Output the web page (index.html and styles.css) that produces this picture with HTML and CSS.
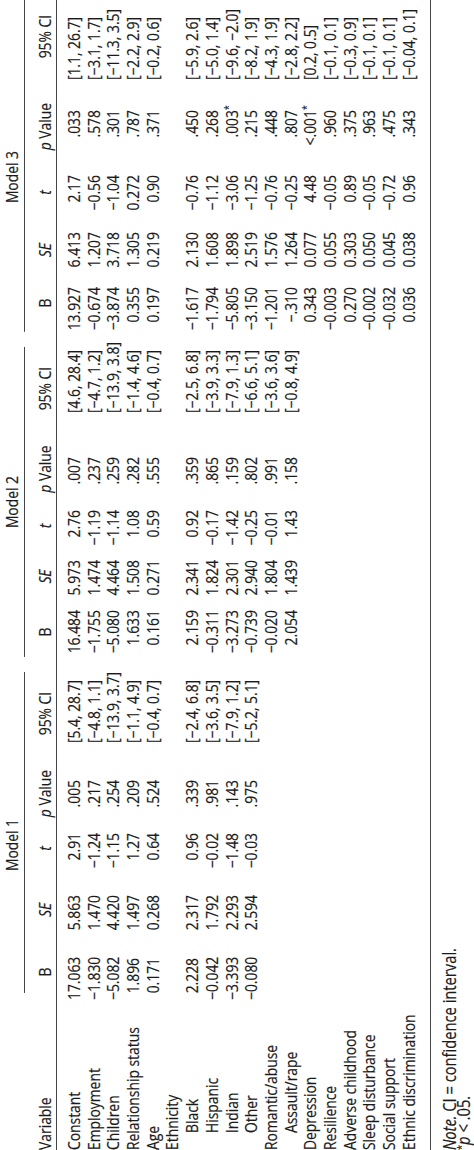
FILE: index.html
```html
<!DOCTYPE html>
<html lang="en">
<head>
<meta charset="utf-8">
<title>Regression table</title>
<link rel="stylesheet" href="styles.css">
</head>
<body>
<div class="page">
  <div class="sheet">
    <div class="models">
      <span></span>
      <div class="model m1">Model 1</div>
      <div class="model m2">Model 2</div>
      <div class="model m3">Model 3</div>
    </div>
    <div class="head">
      <span>Variable</span>
      <span>B</span><span><i>SE</i></span><span><i>t</i></span><span><i>p</i> Value</span><span>95% CI</span>
      <span>B</span><span><i>SE</i></span><span><i>t</i></span><span><i>p</i> Value</span><span>95% CI</span>
      <span>B</span><span><i>SE</i></span><span><i>t</i></span><span><i>p</i> Value</span><span>95% CI</span>
    </div>
    <div class="body">
      <div class="row"><span>Constant</span><span>17.063</span><span>5.863</span><span>2.91</span><span>.005</span><span>[5.4, 28.7]</span><span>16.484</span><span>5.973</span><span>2.76</span><span>.007</span><span>[4.6, 28.4]</span><span>13.927</span><span>6.413</span><span>2.17</span><span>.033</span><span>[1.1, 26.7]</span></div>
      <div class="row"><span>Employment</span><span>−1.830</span><span>1.470</span><span>−1.24</span><span>.217</span><span>[−4.8, 1.1]</span><span>−1.755</span><span>1.474</span><span>−1.19</span><span>.237</span><span>[−4.7, 1.2]</span><span>−0.674</span><span>1.207</span><span>−0.56</span><span>.578</span><span>[−3.1, 1.7]</span></div>
      <div class="row"><span>Children</span><span>−5.082</span><span>4.420</span><span>−1.15</span><span>.254</span><span>[−13.9, 3.7]</span><span>−5.080</span><span>4.464</span><span>−1.14</span><span>.259</span><span>[−13.9, 3.8]</span><span>−3.874</span><span>3.718</span><span>−1.04</span><span>.301</span><span>[−11.3, 3.5]</span></div>
      <div class="row"><span>Relationship status</span><span>1.896</span><span>1.497</span><span>1.27</span><span>.209</span><span>[−1.1, 4.9]</span><span>1.633</span><span>1.508</span><span>1.08</span><span>.282</span><span>[−1.4, 4.6]</span><span>0.355</span><span>1.305</span><span>0.272</span><span>.787</span><span>[−2.2, 2.9]</span></div>
      <div class="row"><span>Age</span><span>0.171</span><span>0.268</span><span>0.64</span><span>.524</span><span>[−0.4, 0.7]</span><span>0.161</span><span>0.271</span><span>0.59</span><span>.555</span><span>[−0.4, 0.7]</span><span>0.197</span><span>0.219</span><span>0.90</span><span>.371</span><span>[−0.2, 0.6]</span></div>
      <div class="row"><span>Ethnicity</span></div>
      <div class="row"><span class="sub">Black</span><span>2.228</span><span>2.317</span><span>0.96</span><span>.339</span><span>[−2.4, 6.8]</span><span>2.159</span><span>2.341</span><span>0.92</span><span>.359</span><span>[−2.5, 6.8]</span><span>−1.617</span><span>2.130</span><span>−0.76</span><span>.450</span><span>[−5.9, 2.6]</span></div>
      <div class="row"><span class="sub">Hispanic</span><span>−0.042</span><span>1.792</span><span>−0.02</span><span>.981</span><span>[−3.6, 3.5]</span><span>−0.311</span><span>1.824</span><span>−0.17</span><span>.865</span><span>[−3.9, 3.3]</span><span>−1.794</span><span>1.608</span><span>−1.12</span><span>.268</span><span>[−5.0, 1.4]</span></div>
      <div class="row"><span class="sub">Indian</span><span>−3.393</span><span>2.293</span><span>−1.48</span><span>.143</span><span>[−7.9, 1.2]</span><span>−3.273</span><span>2.301</span><span>−1.42</span><span>.159</span><span>[−7.9, 1.3]</span><span>−5.805</span><span>1.898</span><span>−3.06</span><span>.003<span class="sig">*</span></span><span>[−9.6, −2.0]</span></div>
      <div class="row"><span class="sub">Other</span><span>−0.080</span><span>2.594</span><span>−0.03</span><span>.975</span><span>[−5.2, 5.1]</span><span>−0.739</span><span>2.940</span><span>−0.25</span><span>.802</span><span>[−6.6, 5.1]</span><span>−3.150</span><span>2.519</span><span>−1.25</span><span>.215</span><span>[−8.2, 1.9]</span></div>
      <div class="row"><span>Romantic/abuse</span><span></span><span></span><span></span><span></span><span></span><span>−0.020</span><span>1.804</span><span>−0.01</span><span>.991</span><span>[−3.6, 3.6]</span><span>−1.201</span><span>1.576</span><span>−0.76</span><span>.448</span><span>[−4.3, 1.9]</span></div>
      <div class="row"><span class="sub">Assault/rape</span><span></span><span></span><span></span><span></span><span></span><span>2.054</span><span>1.439</span><span>1.43</span><span>.158</span><span>[−0.8, 4.9]</span><span>−.310</span><span>1.264</span><span>−0.25</span><span>.807</span><span>[−2.8, 2.2]</span></div>
      <div class="row"><span>Depression</span><span></span><span></span><span></span><span></span><span></span><span></span><span></span><span></span><span></span><span></span><span>0.343</span><span>0.077</span><span>4.48</span><span>&lt;.001<span class="sig">*</span></span><span>[0.2, 0.5]</span></div>
      <div class="row"><span>Resilience</span><span></span><span></span><span></span><span></span><span></span><span></span><span></span><span></span><span></span><span></span><span>−0.003</span><span>0.055</span><span>−0.05</span><span>.960</span><span>[−0.1, 0.1]</span></div>
      <div class="row"><span>Adverse childhood</span><span></span><span></span><span></span><span></span><span></span><span></span><span></span><span></span><span></span><span></span><span>0.270</span><span>0.303</span><span>0.89</span><span>.375</span><span>[−0.3, 0.9]</span></div>
      <div class="row"><span>Sleep disturbance</span><span></span><span></span><span></span><span></span><span></span><span></span><span></span><span></span><span></span><span></span><span>−0.002</span><span>0.050</span><span>−0.05</span><span>.963</span><span>[−0.1, 0.1]</span></div>
      <div class="row"><span>Social support</span><span></span><span></span><span></span><span></span><span></span><span></span><span></span><span></span><span></span><span></span><span>−0.032</span><span>0.045</span><span>−0.72</span><span>.475</span><span>[−0.1, 0.1]</span></div>
      <div class="row"><span>Ethnic discrimination</span><span></span><span></span><span></span><span></span><span></span><span></span><span></span><span></span><span></span><span></span><span>0.036</span><span>0.038</span><span>0.96</span><span>.343</span><span>[−0.04, 0.1]</span></div>
    </div>
    <div class="notes">
      <p><i>Note.</i> CI = confidence interval.</p>
      <p><sup>*</sup><i>p</i> &lt; .05.</p>
    </div>
  </div>
</div>
</body>
</html>
```

FILE: styles.css
```css
:root {
  --sx: 0.84;
  --u: calc(1px / var(--sx));
  --ink: #1a1a1a;
  --rule: #454545;
}

html, body {
  margin: 0;
  padding: 0;
  background: #fff;
}

.page {
  width: 474px;
  height: 1150px;
  overflow: hidden;
}

.sheet {
  width: calc(1160 * var(--u));
  height: 474px;
  transform-origin: 0 0;
  transform: translateY(1150px) rotate(-90deg) scaleX(var(--sx));
  font-family: "Open Sans", Lato, sans-serif;
  font-size: 16.5px;
  color: var(--ink);
  -webkit-text-stroke: 0.2px var(--ink);
  --cols: calc(150 * var(--u)) calc(54 * var(--u)) calc(64 * var(--u)) calc(62 * var(--u)) calc(60 * var(--u)) calc(102 * var(--u))
          calc(60 * var(--u)) calc(50 * var(--u)) calc(50 * var(--u)) calc(63 * var(--u)) calc(100 * var(--u))
          calc(60 * var(--u)) calc(55 * var(--u)) calc(60 * var(--u)) calc(65 * var(--u)) calc(105 * var(--u));
}

.models,
.head,
.row {
  display: grid;
  grid-template-columns: var(--cols);
  white-space: nowrap;
}

/* Model spanners */
.models {
  height: 25px;
}

.model {
  grid-column: span 5;
  box-sizing: border-box;
  height: 25px;
  padding-top: 2px;
  line-height: 20px;
  text-align: center;
  border-bottom: 1px solid var(--rule);
}

.m1 {
  margin-left: calc(7 * var(--u));
  margin-right: calc(14 * var(--u));
  padding-right: calc(25 * var(--u));
}

.m2 {
  margin-left: calc(1 * var(--u));
  margin-right: calc(12 * var(--u));
}

.m3 {
  margin-left: calc(3 * var(--u));
  padding-right: calc(32 * var(--u));
}

/* Column headers */
.head {
  box-sizing: border-box;
  height: 32px;
  padding-top: 10px;
  line-height: 20px;
  border-bottom: 1px solid var(--rule);
}

.head > * {
  text-align: center;
}

.head > :nth-child(1) { text-align: left; }
.head > :nth-child(2) { padding-left: calc(2 * var(--u)); }
.head > :nth-child(3) { padding-left: calc(8 * var(--u)); }
.head > :nth-child(4) { padding-left: calc(5 * var(--u)); }
.head > :nth-child(5) { padding-right: calc(7 * var(--u)); }
.head > :nth-child(6) { padding-right: calc(9 * var(--u)); }
.head > :nth-child(7) { padding-right: calc(8 * var(--u)); }
.head > :nth-child(8) { padding-right: calc(7 * var(--u)); }
.head > :nth-child(9) { padding-right: calc(6 * var(--u)); }
.head > :nth-child(10) { padding-right: calc(5 * var(--u)); }
.head > :nth-child(11) { padding-right: calc(7 * var(--u)); }
.head > :nth-child(12) { padding-left: calc(4 * var(--u)); }
.head > :nth-child(13) { padding-right: calc(5 * var(--u)); }
.head > :nth-child(14) { padding-right: calc(5 * var(--u)); }
.head > :nth-child(15) { padding-left: calc(2 * var(--u)); }
.head > :nth-child(16) { padding-left: calc(12 * var(--u)); }

/* Body rows */
.body {
  padding-top: 7px;
  padding-bottom: 11.4px;
  border-bottom: 1px solid var(--rule);
}

.row {
  height: 19.7px;
  line-height: 19.7px;
}

.row > * {
  text-align: right;
}

.row > :nth-child(1) { text-align: left; }
.row > .sub { padding-left: calc(17 * var(--u)); }
.row > :nth-child(2) { padding-right: calc(12 * var(--u)); }
.row > :nth-child(3) { padding-right: calc(13 * var(--u)); }
.row > :nth-child(4) { padding-right: calc(13 * var(--u)); }
.row > :nth-child(5) { padding-right: calc(20 * var(--u)); }
.row > :nth-child(6) { text-align: left; padding-left: calc(17 * var(--u)); }
.row > :nth-child(7) { padding-right: calc(12 * var(--u)); }
.row > :nth-child(8) { padding-right: calc(12 * var(--u)); }
.row > :nth-child(9) { padding-right: calc(12 * var(--u)); }
.row > :nth-child(10) { padding-right: calc(22 * var(--u)); }
.row > :nth-child(11) { text-align: left; padding-left: calc(22 * var(--u)); }
.row > :nth-child(12) { padding-right: calc(12 * var(--u)); }
.row > :nth-child(13) { padding-right: calc(12 * var(--u)); }
.row > :nth-child(14) { padding-right: calc(15 * var(--u)); }
.row > :nth-child(15) { padding-right: calc(15 * var(--u)); }
.row > :nth-child(16) { text-align: left; padding-left: calc(15 * var(--u)); }

.sig {
  display: inline-block;
  width: 0;
  font-size: 10px;
  line-height: 10px;
  vertical-align: 6px;
  text-align: left;
}

/* Notes */
.notes {
  padding-top: 11px;
  font-size: 17.5px;
  line-height: 14px;
}

.notes p {
  margin: 0;
}

.notes sup {
  font-size: 11px;
  line-height: 0;
  vertical-align: 5px;
}
```
